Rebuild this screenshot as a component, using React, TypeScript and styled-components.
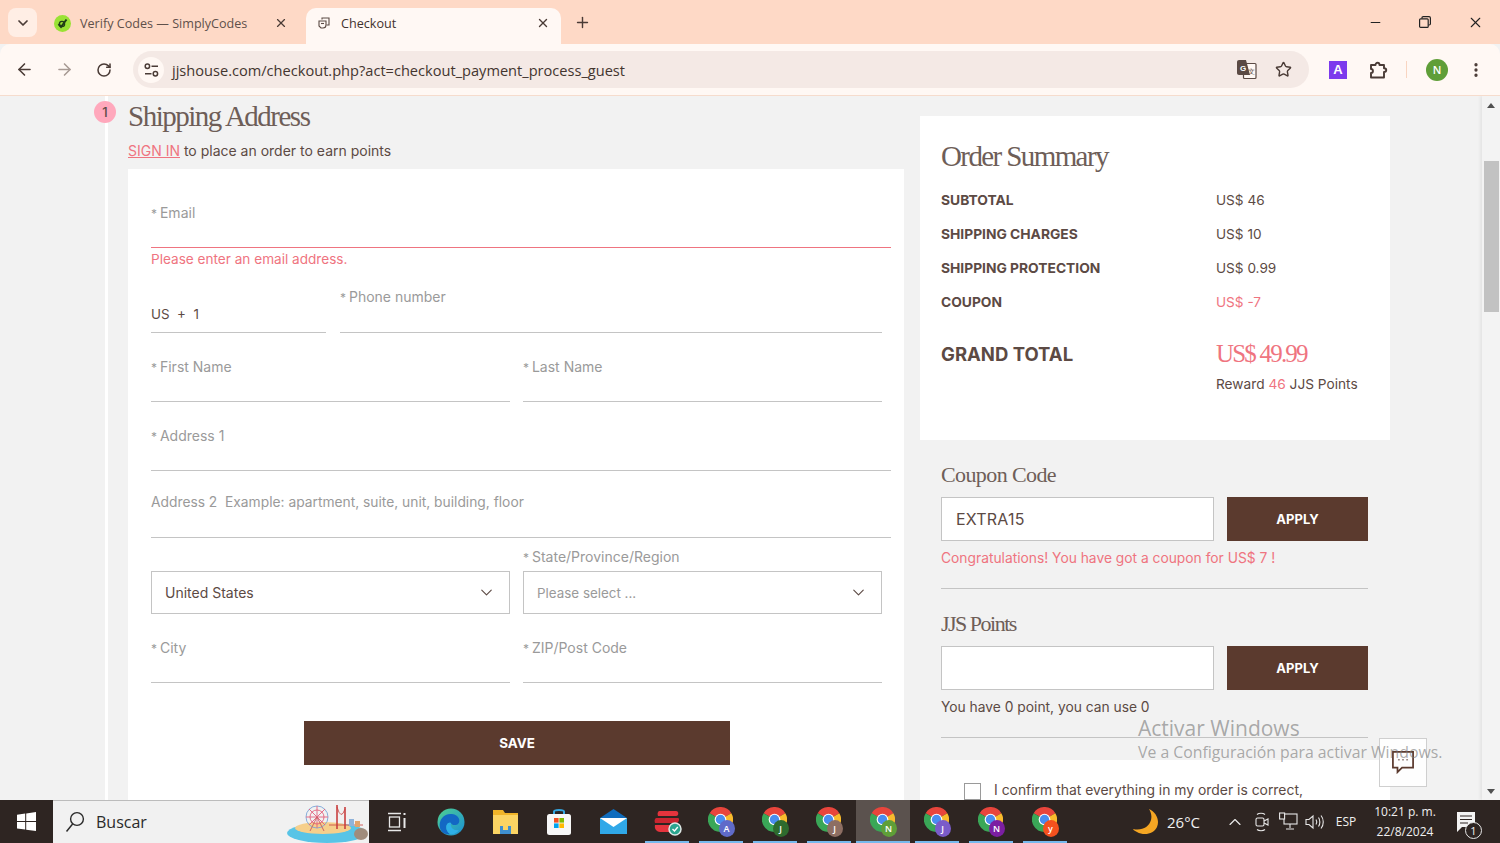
import styled, { createGlobalStyle } from "styled-components";
import { ArrowLeft, ArrowRight, ChevronDown, ChevronUp, EllipsisVertical, Minus, Plus, RotateCw, Star, X } from "lucide-react";

const GlobalStyle = createGlobalStyle`
  html, body {
    margin: 0;
    padding: 0;
    height: 100%;
    overflow: hidden;
    background: #f2f2f2;
    font-family: "Inter", "Liberation Sans", sans-serif;
  }
  * {
    box-sizing: border-box;
  }
`;

const BROWN = "#5b3a2e";
const TEXT = "#5c4a44";
const SERIF_TEXT = "#6e5e58";
const PINK = "#ef7480";
const LINE = "#c4c4c4";
const UI_FONT = `"Open Sans", "Noto Sans", sans-serif`;
const SERIF = `"Liberation Serif", serif`;

const chromeBadges = [
  { letter: "A", color: "#5f6bc9" },
  { letter: "J", color: "#2e6b2e" },
  { letter: "J", color: "#8d6e63" },
  { letter: "N", color: "#5f9e38", active: true },
  { letter: "J", color: "#7a5cc9" },
  { letter: "N", color: "#7b1fa2" },
  { letter: "y", color: "#f4511e" },
];

const summaryRows = [
  { label: "SUBTOTAL", value: "US$ 46" },
  { label: "SHIPPING CHARGES", value: "US$ 10" },
  { label: "SHIPPING PROTECTION", value: "US$ 0.99" },
  { label: "COUPON", value: "US$ -7", pink: true },
];

const ChromeLogo = ({ size = 24 }: { size?: number }) => (
  <svg width={size} height={size} viewBox="0 0 24 24">
    <path d="M12 12 1.6 6A12 12 0 0 1 22.4 6Z" fill="#e8453c" />
    <path d="M12 12 22.4 6A12 12 0 0 1 12 24Z" fill="#f9bb2d" />
    <path d="M12 12 12 24A12 12 0 0 1 1.6 6Z" fill="#3aa757" />
    <circle cx="12" cy="12" r="5.6" fill="#fff" />
    <circle cx="12" cy="12" r="4.5" fill="#4a8df0" />
  </svg>
);

const WindowsLogo = () => (
  <svg width="19" height="19" viewBox="0 0 19 19" fill="#fff">
    <path d="M0 2.7 8.2 1.5V9H0ZM9.2 1.4 19 0V9H9.2ZM0 10H8.2V17.6L0 16.4ZM9.2 10H19V19L9.2 17.7Z" />
  </svg>
);

const SearchGlass = () => (
  <svg width="20" height="22" viewBox="0 0 20 22" fill="none" stroke="#2a2a2a" strokeWidth="1.4">
    <circle cx="12" cy="8" r="6.4" />
    <path d="M7.6 13 1.5 20.5" />
  </svg>
);

const SearchArt = () => (
  <svg width="84" height="43" viewBox="0 0 84 43">
    <ellipse cx="42" cy="32" rx="40" ry="10" fill="#58c4e6" />
    <ellipse cx="38" cy="27" rx="28" ry="6" fill="#f6cf8b" />
    <g stroke="#e2607d" strokeWidth="0.9" fill="none">
      <circle cx="32" cy="16" r="11" stroke="#7aa5d8" />
      <circle cx="32" cy="16" r="7" />
      <path d="M21 16H43M32 5V27M24 8 40 24M40 8 24 24" />
      <path d="M32 16 25 30M32 16 39 30" stroke="#c75b5b" />
    </g>
    <path d="M52 28V4M60 28V6" stroke="#c94040" strokeWidth="1.6" />
    <path d="M52 6Q56 20 60 8M44 24H78" stroke="#c94040" strokeWidth="0.8" fill="none" />
    <rect x="64" y="18" width="5" height="7" fill="#8fb3da" />
    <rect x="70" y="20" width="5" height="6" fill="#e0a46e" />
    <ellipse cx="76" cy="33" rx="7" ry="6" fill="#a08c7c" />
  </svg>
);

const TaskViewIcon = () => (
  <svg width="19" height="20" viewBox="0 0 19 20" fill="none" stroke="#e8e8e8" strokeWidth="1.3">
    <path d="M0 1.5H13M0 18.5H13" />
    <rect x="1.5" y="5" width="10" height="10" />
    <path d="M16.5 1V3M16.5 6V16" strokeWidth="2" />
  </svg>
);

const EdgeIcon = () => (
  <svg width="28" height="28" viewBox="0 0 28 28">
    <defs>
      <linearGradient id="edgeA" x1="0" y1="0" x2="1" y2="1">
        <stop offset="0" stopColor="#4fd08f" />
        <stop offset="1" stopColor="#1a8fd8" />
      </linearGradient>
    </defs>
    <circle cx="14" cy="14" r="13.5" fill="url(#edgeA)" />
    <path d="M3 20C1 11 8 5 15 6 22 7 24 13 21 16 19 18 14 17 14 15 9 13 7 22 13 26 8 27 4 24 3 20Z" fill="#1368c4" />
    <path d="M14 15C13 20 17 23 22 22 20 25 16 27 13 26 7 22 9 13 14 15Z" fill="#2fb0e8" />
  </svg>
);

const FolderIcon = () => (
  <svg width="25" height="26" viewBox="0 0 25 26">
    <path d="M0 1H10L12 4H25V25H0Z" fill="#f0b429" />
    <rect y="6" width="25" height="19" fill="#fbd463" />
    <rect x="7" y="17" width="11" height="8" fill="#3f8fcf" />
    <rect x="10" y="17" width="5" height="4" fill="#fbd463" />
  </svg>
);

const StoreIcon = () => (
  <svg width="26" height="27" viewBox="0 0 26 27">
    <path d="M8 7V3.5C8 1.5 18 1.5 18 3.5V7" fill="none" stroke="#35a6e0" strokeWidth="2" />
    <rect x="1" y="6" width="24" height="21" rx="2.5" fill="#f7f7f7" />
    <rect x="8" y="10" width="4.6" height="4.6" fill="#f25022" />
    <rect x="13.4" y="10" width="4.6" height="4.6" fill="#7fba00" />
    <rect x="8" y="15.4" width="4.6" height="4.6" fill="#00a4ef" />
    <rect x="13.4" y="15.4" width="4.6" height="4.6" fill="#ffb900" />
  </svg>
);

const MailIcon = () => (
  <svg width="27" height="25" viewBox="0 0 27 25">
    <path d="M13.5 0 27 9V25H0V9Z" fill="#0f6cbd" />
    <path d="M0 9H27V25H0Z" fill="#30a8e8" />
    <path d="M0 9 13.5 18 27 9Z" fill="#fff" />
  </svg>
);

const VpnIcon = () => (
  <svg width="30" height="28" viewBox="0 0 30 28">
    <path d="M8 3H24C27 3 27 8 24 8H6C5 5 6 3 8 3Z" fill="#e5343d" />
    <path d="M5 10H26C28 10 27 15 24 15H3C2 12 3 10 5 10Z" fill="#c9252f" />
    <path d="M3 17H20C22 17 21 24 17 24H8C5 24 2 21 3 17Z" fill="#e5343d" />
    <circle cx="23" cy="21" r="6" fill="#2ba58f" stroke="#dfe8e6" strokeWidth="1.5" />
    <path d="M20.5 21 22.5 23 25.8 19" fill="none" stroke="#fff" strokeWidth="1.4" />
  </svg>
);

const MoonIcon = () => (
  <svg width="26" height="26" viewBox="0 0 26 26">
    <path d="M16 0C23 3 27 11 24 18 21 25 11 27 4 23 1 22 0 20 0 20 9 22 16 18 18 11 19 7 18 3 16 0Z" fill="#f5a623" />
  </svg>
);

const MeetIcon = () => (
  <svg width="16" height="20" viewBox="0 0 16 20" fill="none" stroke="#e8e8e8" strokeWidth="1.1">
    <path d="M3 2.5C5 .8 9 .8 11 2.5M3 17.5C5 19.2 9 19.2 11 17.5" />
    <rect x="2" y="6" width="8" height="8" rx="1.5" />
    <path d="M10 9 14 7V13L10 11" />
  </svg>
);

const NetworkIcon = () => (
  <svg width="19" height="19" viewBox="0 0 19 19" fill="none" stroke="#e8e8e8" strokeWidth="1.1">
    <rect x="5" y="2" width="13" height="10" />
    <path d="M11 12V16M7 17H15" />
    <rect x=".6" y="1" width="5" height="6" fill="#2e2522" />
  </svg>
);

const VolumeIcon = () => (
  <svg width="20" height="18" viewBox="0 0 20 18" fill="none" stroke="#e8e8e8" strokeWidth="1.1">
    <path d="M1 6.5H4L8 3V15L4 11.5H1Z" />
    <path d="M11 6.5C12 8 12 10 11 11.5M13.5 4.5C15.3 7 15.3 11 13.5 13.5M16 2.5C19 6 19 12 16 15.5" />
  </svg>
);

const NotificationIcon = () => (
  <svg width="18" height="20" viewBox="0 0 18 20">
    <path d="M0 0H18V15H5L0 20Z" fill="#f4f4f4" />
    <path d="M3 4H15M3 7.5H15M3 11H11" stroke="#2e2522" strokeWidth="1.2" />
  </svg>
);

const TranslateIcon = () => (
  <svg width="20" height="20" viewBox="0 0 20 20">
    <rect x="6.5" y="3.5" width="12.5" height="15" rx="1" fill="#fff8f4" stroke="#5b4a44" strokeWidth="1.2" />
    <path d="M0 2C0 .9.9 0 2 0H9L13 15H2C.9 15 0 14 0 13Z" fill="#5b4a44" />
    <text x="3" y="11" fontSize="8" fontWeight="700" fill="#fff" fontFamily="Liberation Sans, sans-serif">G</text>
    <text x="11" y="14" fontSize="7" fill="#5b4a44" fontFamily="Liberation Sans, sans-serif">文</text>
  </svg>
);

const TuneIcon = () => (
  <svg width="15" height="14" viewBox="0 0 15 14" fill="none" stroke="#4a3b36" strokeWidth="1.5">
    <circle cx="3.4" cy="3.2" r="2.2" />
    <path d="M7.5 3.2H14M1 10.8H7.5" />
    <circle cx="11.4" cy="10.8" r="2.2" />
  </svg>
);

const PuzzleIcon = () => (
  <svg width="19" height="18" viewBox="0 0 19 18" fill="none" stroke="#4a3b36" strokeWidth="1.9" strokeLinejoin="round">
    <path d="M2 4H6.5C6.5 1 10.5 1 10.5 4H15V7.2C18 7.2 18 11 15 11V16.5H2V12C4.6 12 4.6 8 2 8Z" />
  </svg>
);

const SimplyCodesIcon = () => (
  <svg width="17" height="17" viewBox="0 0 17 17">
    <circle cx="8.5" cy="8.5" r="8.5" fill="#9ae234" />
    <path d="M4.5 9 7 12 12.5 4.5" fill="none" stroke="#1f3d16" strokeWidth="2" />
    <circle cx="8" cy="9" r="2.6" fill="none" stroke="#1f3d16" strokeWidth="1.3" />
  </svg>
);

const CheckoutFavicon = () => (
  <svg width="12" height="12" viewBox="0 0 12 12" fill="none" stroke="#5b4a44" strokeWidth="1.1">
    <path d="M4 2.5V1H11V8H8.5" />
    <path d="M1 4H8V8C8 10 6.5 11 5 11H3L1 9Z" />
    <path d="M3 6.5H6" />
  </svg>
);

const ChatIcon = () => (
  <svg width="22" height="23" viewBox="0 0 24 25" fill="none" stroke="#5b3a2e" strokeWidth="1.9">
    <path d="M1 1H23V18H11L6 23V18H1Z" />
    <path d="M6.5 9.5H8.5M11 9.5H13M15.5 9.5H17.5" strokeWidth="1.6" stroke="#9a8a84" />
  </svg>
);

const ScrollArrow = styled.span<{ $down?: boolean }>`
  width: 0;
  height: 0;
  border-left: 4px solid transparent;
  border-right: 4px solid transparent;
  ${(p) => (p.$down ? "border-top: 5px solid #505050;" : "border-bottom: 5px solid #505050;")}
`;

export default function App() {
  return (
    <>
      <GlobalStyle />
      <Screen>
        <TabStrip>
          <TabSearch>
            <ChevronDown size={16} strokeWidth={2.6} />
          </TabSearch>
          <InactiveTab>
            <SimplyCodesIcon />
            <TabTitle>Verify Codes — SimplyCodes</TabTitle>
            <X size={14} strokeWidth={2} />
          </InactiveTab>
          <ActiveTab>
            <CheckoutFavicon />
            <TabTitle $active>Checkout</TabTitle>
            <X size={14} strokeWidth={2.4} />
          </ActiveTab>
          <NewTab>
            <Plus size={17} strokeWidth={2} />
          </NewTab>
          <WindowButtons>
            <WindowButton>
              <Minus size={15} strokeWidth={1.6} />
            </WindowButton>
            <WindowButton>
              <svg width="12" height="12" viewBox="0 0 12 12" fill="none" stroke="#222" strokeWidth="1.2">
                <rect x=".6" y="2.8" width="8.6" height="8.6" rx="1" />
                <path d="M3 2.6V1.8C3 1 3.4.6 4.2.6H10C10.8.6 11.4 1.2 11.4 2V7.8C11.4 8.6 11 9 10.2 9H9.4" />
              </svg>
            </WindowButton>
            <WindowButton>
              <X size={17} strokeWidth={1.5} />
            </WindowButton>
          </WindowButtons>
        </TabStrip>

        <Toolbar>
          <NavButton>
            <ArrowLeft size={19} strokeWidth={2} />
          </NavButton>
          <NavButton $disabled>
            <ArrowRight size={19} strokeWidth={2} />
          </NavButton>
          <NavButton>
            <RotateCw size={16} strokeWidth={2.3} />
          </NavButton>
          <Omnibox>
            <SiteButton>
              <TuneIcon />
            </SiteButton>
            <UrlText>jjshouse.com/checkout.php?act=checkout_payment_process_guest</UrlText>
            <OmniIcons>
              <TranslateIcon />
              <Star size={17} strokeWidth={2} />
            </OmniIcons>
          </Omnibox>
          <ExtensionA>A</ExtensionA>
          <PuzzleSlot>
            <PuzzleIcon />
          </PuzzleSlot>
          <ToolbarDivider />
          <ProfileBadge>N</ProfileBadge>
          <MenuSlot>
            <EllipsisVertical size={18} strokeWidth={2.4} />
          </MenuSlot>
        </Toolbar>

        <Viewport>
          <Page>
            <LeftColumn>
              <StepBadge>1</StepBadge>
              <PageTitle>Shipping Address</PageTitle>
              <SignInLine>
                <SignInLink>SIGN IN</SignInLink> to place an order to earn points
              </SignInLine>
              <FormCard>
                <EmailField $gap={25}>
                  <FieldLabel>
                    <Required>*</Required> Email
                  </FieldLabel>
                </EmailField>
                <ErrorText>Please enter an email address.</ErrorText>
                <PhoneRow>
                  <PhonePrefix>US&nbsp; + &nbsp;1</PhonePrefix>
                  <Field $gap={26}>
                    <FieldLabel>
                      <Required>*</Required> Phone number
                    </FieldLabel>
                  </Field>
                </PhoneRow>
                <TwoColumns $top={25}>
                  <Field $gap={25}>
                    <FieldLabel>
                      <Required>*</Required> First Name
                    </FieldLabel>
                  </Field>
                  <Field $gap={25}>
                    <FieldLabel>
                      <Required>*</Required> Last Name
                    </FieldLabel>
                  </Field>
                </TwoColumns>
                <Field $top={25} $gap={25}>
                  <FieldLabel>
                    <Required>*</Required> Address 1
                  </FieldLabel>
                </Field>
                <Field $top={22} $gap={26}>
                  <FieldHint>Address 2&nbsp; Example: apartment, suite, unit, building, floor</FieldHint>
                </Field>
                <TwoColumns $top={10}>
                  <SelectGroup>
                    <SelectBox $offset={23}>
                      <SelectValue>United States</SelectValue>
                      <ChevronDown size={19} strokeWidth={1.4} />
                    </SelectBox>
                  </SelectGroup>
                  <SelectGroup>
                    <FieldLabel>
                      <Required>*</Required> State/Province/Region
                    </FieldLabel>
                    <SelectBox>
                      <SelectValue $placeholder>Please select ...</SelectValue>
                      <ChevronDown size={19} strokeWidth={1.4} />
                    </SelectBox>
                  </SelectGroup>
                </TwoColumns>
                <TwoColumns $top={25}>
                  <Field $gap={25}>
                    <FieldLabel>
                      <Required>*</Required> City
                    </FieldLabel>
                  </Field>
                  <Field $gap={25}>
                    <FieldLabel>
                      <Required>*</Required> ZIP/Post Code
                    </FieldLabel>
                  </Field>
                </TwoColumns>
                <SaveButton>SAVE</SaveButton>
              </FormCard>
            </LeftColumn>

            <RightColumn>
              <SummaryCard>
                <SummaryTitle>Order Summary</SummaryTitle>
                {summaryRows.map((row) => (
                  <SummaryRow key={row.label}>
                    <SummaryLabel>{row.label}</SummaryLabel>
                    <SummaryValue $pink={row.pink}>{row.value}</SummaryValue>
                  </SummaryRow>
                ))}
                <GrandRow>
                  <GrandLabel>GRAND TOTAL</GrandLabel>
                  <GrandValue>US$ 49.99</GrandValue>
                </GrandRow>
                <RewardLine>
                  Reward <PinkText>46</PinkText> JJS Points
                </RewardLine>
              </SummaryCard>

              <SideSection>
                <SectionTitle $spacing={-0.6}>Coupon Code</SectionTitle>
                <ApplyRow>
                  <ApplyInput>EXTRA15</ApplyInput>
                  <ApplyButton>APPLY</ApplyButton>
                </ApplyRow>
                <SectionNote $pink>Congratulations! You have got a coupon for US$ 7 !</SectionNote>
                <SectionTitle $spacing={-1.5}>JJS Points</SectionTitle>
                <ApplyRow>
                  <ApplyInput />
                  <ApplyButton>APPLY</ApplyButton>
                </ApplyRow>
                <SectionNote>You have 0 point, you can use 0</SectionNote>
              </SideSection>

              <ConfirmCard>
                <ConfirmBox />
                <ConfirmText>I confirm that everything in my order is correct,</ConfirmText>
              </ConfirmCard>
            </RightColumn>
          </Page>

          <Scrollbar>
            <ScrollButton>
              <ScrollArrow />
            </ScrollButton>
            <ScrollThumb />
            <ScrollButton>
              <ScrollArrow $down />
            </ScrollButton>
          </Scrollbar>

          <ChatButton>
            <ChatIcon />
          </ChatButton>
          <Watermark>
            <WatermarkTitle>Activar Windows</WatermarkTitle>
            <WatermarkText>Ve a Configuración para activar Windows.</WatermarkText>
          </Watermark>
        </Viewport>

        <Taskbar>
          <StartButton>
            <WindowsLogo />
          </StartButton>
          <SearchBox>
            <SearchGlass />
            <SearchText>Buscar</SearchText>
            <SearchArt />
          </SearchBox>
          <TaskButton>
            <TaskViewIcon />
          </TaskButton>
          <TaskButton>
            <EdgeIcon />
          </TaskButton>
          <TaskButton>
            <FolderIcon />
          </TaskButton>
          <TaskButton>
            <StoreIcon />
          </TaskButton>
          <TaskButton>
            <MailIcon />
          </TaskButton>
          <TaskButton $open>
            <VpnIcon />
          </TaskButton>
          {chromeBadges.map((item, i) => (
            <TaskButton key={i} $open $active={item.active}>
              <ChromeWrap>
                <ChromeLogo size={25} />
                <ChromeBadge $color={item.color}>{item.letter}</ChromeBadge>
              </ChromeWrap>
            </TaskButton>
          ))}
          <Weather>
            <MoonIcon />
            <WeatherText>26°C</WeatherText>
          </Weather>
          <TrayIcon $width={28}>
            <ChevronUp size={20} strokeWidth={1.4} />
          </TrayIcon>
          <TrayIcon $width={26}>
            <MeetIcon />
          </TrayIcon>
          <TrayIcon $width={26}>
            <NetworkIcon />
          </TrayIcon>
          <TrayIcon $width={27}>
            <VolumeIcon />
          </TrayIcon>
          <TrayLabel>ESP</TrayLabel>
          <Clock>
            <span>10:21 p. m.</span>
            <span>22/8/2024</span>
          </Clock>
          <NotifyWrap>
            <NotificationIcon />
            <NotifyCount>1</NotifyCount>
          </NotifyWrap>
        </Taskbar>
      </Screen>
    </>
  );
}

const Screen = styled.div`
  width: 1500px;
  height: 843px;
  display: flex;
  flex-direction: column;
  overflow: hidden;
`;

const TabStrip = styled.div`
  height: 44px;
  flex: none;
  display: flex;
  align-items: flex-end;
  background: #fed9c6;
  font-family: ${UI_FONT};
  color: #4a3b36;
`;

const TabSearch = styled.div`
  width: 29px;
  height: 29px;
  margin: 0 0 7px 8px;
  border-radius: 8px;
  background: #ffeee5;
  display: flex;
  align-items: center;
  justify-content: center;
`;

const InactiveTab = styled.div`
  width: 253px;
  height: 36px;
  margin-left: 16px;
  padding: 0 18px 6px 1px;
  display: flex;
  align-items: center;
  gap: 9px;
  svg:last-child {
    margin-left: auto;
  }
`;

const ActiveTab = styled.div`
  width: 255px;
  height: 36px;
  padding: 0 11px 6px 12px;
  border-radius: 10px 10px 0 0;
  background: #fff8f4;
  display: flex;
  align-items: center;
  gap: 11px;
  svg:last-child {
    margin-left: auto;
  }
`;

const TabTitle = styled.span<{ $active?: boolean }>`
  font-size: 12.6px;
  white-space: nowrap;
  color: ${(p) => (p.$active ? "#3f322e" : "#5f504a")};
`;

const NewTab = styled.div`
  width: 42px;
  height: 36px;
  padding-bottom: 7px;
  display: flex;
  align-items: center;
  justify-content: center;
`;

const WindowButtons = styled.div`
  margin-left: auto;
  height: 44px;
  display: flex;
  color: #222;
`;

const WindowButton = styled.div`
  width: 50px;
  height: 44px;
  display: flex;
  align-items: center;
  justify-content: center;
`;

const Toolbar = styled.div`
  height: 52px;
  flex: none;
  display: flex;
  align-items: center;
  background: #fff8f4;
  border-bottom: 1px solid #f6dccd;
  border-radius: 10px 10px 0 0;
  color: #4a3b36;
`;

const NavButton = styled.div<{ $disabled?: boolean }>`
  width: 40px;
  display: flex;
  justify-content: center;
  color: ${(p) => (p.$disabled ? "#a89a94" : "#4a3b36")};
  &:first-child {
    margin-left: 4px;
  }
`;

const Omnibox = styled.div`
  width: 1176px;
  height: 37px;
  margin-left: 9px;
  padding: 0 17px 0 5px;
  border-radius: 19px;
  background: #f4e9e5;
  display: flex;
  align-items: center;
`;

const SiteButton = styled.div`
  width: 26px;
  height: 26px;
  border-radius: 50%;
  background: #fff8f4;
  display: flex;
  align-items: center;
  justify-content: center;
`;

const UrlText = styled.span`
  margin-left: 8px;
  font: 14.6px ${UI_FONT};
  color: #43352f;
  white-space: nowrap;
`;

const OmniIcons = styled.div`
  margin-left: auto;
  display: flex;
  align-items: center;
  gap: 18px;
`;

const ExtensionA = styled.div`
  width: 18px;
  height: 18px;
  margin-left: 20px;
  background: #7c3aed;
  color: #fff;
  font: 700 13px/18px "Liberation Sans", sans-serif;
  text-align: center;
`;

const PuzzleSlot = styled.div`
  width: 40px;
  margin-left: 11px;
  display: flex;
  justify-content: center;
`;

const ToolbarDivider = styled.div`
  width: 1px;
  height: 17px;
  margin-left: 8px;
  background: #f9d5c1;
`;

const ProfileBadge = styled.div`
  width: 22px;
  height: 22px;
  margin-left: 19px;
  border-radius: 50%;
  background: #5f9e38;
  color: #fff;
  font: 600 11px/22px ${UI_FONT};
  text-align: center;
`;

const MenuSlot = styled.div`
  width: 40px;
  margin-left: 8px;
  display: flex;
  justify-content: center;
`;

const Viewport = styled.div`
  position: relative;
  flex: 1;
  min-height: 0;
  display: flex;
  background: #f2f2f2;
  overflow: hidden;
`;

const Page = styled.div`
  flex: 1;
  min-width: 0;
  padding-left: 105px;
  display: flex;
  gap: 16px;
  align-items: stretch;
`;

const LeftColumn = styled.div`
  position: relative;
  width: 799px;
  flex: none;
  padding-left: 20px;
  border-left: 3px solid #fff;
`;

const StepBadge = styled.div`
  position: absolute;
  left: -14px;
  top: 5px;
  width: 22px;
  height: 22px;
  border-radius: 50%;
  background: #ffa8bc;
  color: #5c4a44;
  font-size: 13px;
  font-weight: 500;
  line-height: 22px;
  text-align: center;
`;

const PageTitle = styled.h1`
  margin: 0;
  height: 40px;
  font: 400 29px/40px ${SERIF};
  letter-spacing: -1.5px;
  color: ${SERIF_TEXT};
`;

const SignInLine = styled.div`
  margin-top: 6px;
  font-size: 14px;
  line-height: 18px;
  color: ${TEXT};
`;

const SignInLink = styled.span`
  color: ${PINK};
  text-decoration: underline;
`;

const FormCard = styled.div`
  margin-top: 9px;
  height: 640px;
  padding: 35px 13px 0 23px;
  background: #fff;
`;

const Field = styled.div<{ $top?: number; $gap: number }>`
  margin-top: ${(p) => p.$top ?? 0}px;
  padding-bottom: ${(p) => p.$gap}px;
  border-bottom: 1px solid ${LINE};
`;

const EmailField = styled(Field)`
  border-bottom-color: ${PINK};
`;

const FieldLabel = styled.div`
  font-size: 14px;
  line-height: 18px;
  color: #9a9a9a;
`;

const FieldHint = styled.div`
  font-size: 13.8px;
  line-height: 18px;
  color: #9a9a9a;
`;

const Required = styled.span`
  font-size: 12px;
  line-height: 0;
  margin-right: -1px;
`;

const ErrorText = styled.div`
  margin-top: 2px;
  font-size: 13.6px;
  line-height: 18px;
  color: ${PINK};
`;

const PhoneRow = styled.div`
  margin-top: 20px;
  margin-right: 9px;
  display: grid;
  grid-template-columns: 175px 1fr;
  gap: 14px;
  align-items: end;
`;

const PhonePrefix = styled.div`
  padding-bottom: 9px;
  border-bottom: 1px solid ${LINE};
  font-size: 13.4px;
  line-height: 18px;
  color: ${TEXT};
`;

const TwoColumns = styled.div<{ $top: number }>`
  margin-top: ${(p) => p.$top}px;
  margin-right: 9px;
  display: grid;
  grid-template-columns: 359px 359px;
  gap: 13px;
`;

const SelectGroup = styled.div`
  display: flex;
  flex-direction: column;
  gap: 5px;
`;

const SelectBox = styled.div<{ $offset?: number }>`
  height: 43px;
  margin-top: ${(p) => p.$offset ?? 0}px;
  padding: 0 13px;
  border: 1px solid ${LINE};
  display: flex;
  align-items: center;
  justify-content: space-between;
  color: #5c4a44;
`;

const SelectValue = styled.span<{ $placeholder?: boolean }>`
  font-size: ${(p) => (p.$placeholder ? "13.4px" : "14px")};
  color: ${(p) => (p.$placeholder ? "#9a9a9a" : TEXT)};
`;

const SaveButton = styled.div`
  width: 426px;
  height: 44px;
  margin: 38px 0 0 153px;
  background: ${BROWN};
  color: #fff;
  font-size: 13.4px;
  font-weight: 700;
  line-height: 44px;
  text-align: center;
`;

const RightColumn = styled.div`
  width: 470px;
  padding-top: 20px;
  display: flex;
  flex-direction: column;
  flex: none;
`;

const SummaryCard = styled.div`
  height: 324px;
  flex: none;
  padding: 20px 21px 0;
  background: #fff;
`;

const SummaryTitle = styled.h2`
  margin: 0 0 7px;
  height: 40px;
  font: 400 29px/40px ${SERIF};
  letter-spacing: -1.6px;
  color: ${SERIF_TEXT};
`;

const SummaryRow = styled.div`
  height: 34px;
  display: grid;
  grid-template-columns: 275px 1fr;
  align-items: center;
  font-size: 13.8px;
`;

const SummaryLabel = styled.span`
  font-weight: 700;
  color: ${TEXT};
`;

const SummaryValue = styled.span<{ $pink?: boolean }>`
  font-size: 13.6px;
  color: ${(p) => (p.$pink ? PINK : TEXT)};
`;

const GrandRow = styled.div`
  margin-top: 19px;
  height: 31px;
  display: grid;
  grid-template-columns: 275px 1fr;
  align-items: center;
`;

const GrandLabel = styled.span`
  font-size: 18.5px;
  font-weight: 700;
  color: ${TEXT};
`;

const GrandValue = styled.span`
  font: 400 25px/31px ${SERIF};
  letter-spacing: -1.8px;
  color: ${PINK};
`;

const RewardLine = styled.div`
  margin: 6px 0 0 275px;
  font-size: 13.7px;
  line-height: 18px;
  color: ${TEXT};
`;

const PinkText = styled.span`
  color: ${PINK};
`;

const SideSection = styled.div`
  padding: 20px 22px 0 21px;
`;

const SectionTitle = styled.h3<{ $spacing: number }>`
  margin: 0 0 7px;
  height: 30px;
  font: 400 22px/30px ${SERIF};
  letter-spacing: ${(p) => p.$spacing}px;
  color: ${SERIF_TEXT};
`;

const ApplyRow = styled.div`
  display: grid;
  grid-template-columns: 273px 141px;
  gap: 13px;
`;

const ApplyInput = styled.div`
  height: 44px;
  padding-left: 14px;
  border: 1px solid ${LINE};
  background: #fff;
  font-size: 16px;
  letter-spacing: 0.2px;
  line-height: 42px;
  color: ${TEXT};
`;

const ApplyButton = styled.div`
  height: 44px;
  background: ${BROWN};
  color: #fff;
  font-size: 13px;
  font-weight: 700;
  line-height: 44px;
  text-align: center;
`;

const SectionNote = styled.div<{ $pink?: boolean }>`
  margin-top: 8px;
  margin-bottom: 20px;
  padding-bottom: 21px;
  border-bottom: 1px solid ${LINE};
  font-size: 13.8px;
  line-height: 18px;
  color: ${(p) => (p.$pink ? PINK : TEXT)};
`;

const ConfirmCard = styled.div`
  margin-top: 2px;
  height: 60px;
  flex: none;
  padding: 23px 0 0 44px;
  background: #fff;
  display: flex;
  align-items: flex-start;
  gap: 13px;
`;

const ConfirmBox = styled.div`
  width: 17px;
  height: 17px;
  flex: none;
  border: 1px solid #9a9a9a;
`;

const ConfirmText = styled.span`
  font-size: 13.9px;
  line-height: 15px;
  color: ${TEXT};
`;

const Scrollbar = styled.div`
  width: 18px;
  flex: none;
  display: flex;
  flex-direction: column;
  background: #f3f3f3;
  box-shadow: -2px 0 3px rgba(0, 0, 0, 0.06);
`;

const ScrollButton = styled.div`
  height: 18px;
  display: flex;
  align-items: center;
  justify-content: center;
`;

const ScrollThumb = styled.div`
  width: 15px;
  height: 151px;
  margin: 47px 0 auto 2px;
  background: #c2c2c2;
`;

const ChatButton = styled.div`
  position: absolute;
  left: 1379px;
  top: 642px;
  width: 48px;
  height: 49px;
  border: 1px solid #cfcfcf;
  background: rgba(255, 255, 255, 0.9);
  display: flex;
  align-items: center;
  justify-content: center;
`;

const Watermark = styled.div`
  position: absolute;
  left: 1138px;
  top: 618px;
  font-family: ${UI_FONT};
  color: rgba(120, 120, 120, 0.62);
  white-space: nowrap;
  pointer-events: none;
`;

const WatermarkTitle = styled.div`
  font-size: 21px;
  line-height: 28px;
`;

const WatermarkText = styled.div`
  font-size: 15.8px;
  line-height: 20px;
`;

const Taskbar = styled.div`
  height: 43px;
  flex: none;
  display: flex;
  align-items: stretch;
  background: #2e2522;
  font-family: ${UI_FONT};
  color: #f0f0f0;
`;

const StartButton = styled.div`
  width: 53px;
  display: flex;
  align-items: center;
  justify-content: center;
`;

const SearchBox = styled.div`
  width: 316px;
  margin-right: 1px;
  padding-left: 12px;
  border-top: 1px solid #bcbcbc;
  background: #f1f1f1;
  display: flex;
  align-items: center;
  gap: 11px;
  svg:last-child {
    margin-left: auto;
  }
`;

const SearchText = styled.span`
  font-size: 16px;
  color: #2a2a2a;
`;

const TaskButton = styled.div<{ $open?: boolean; $active?: boolean }>`
  position: relative;
  width: 54px;
  flex: none;
  display: flex;
  align-items: center;
  justify-content: center;
  background: ${(p) => (p.$active ? "#5b524e" : "transparent")};
  ${(p) =>
    p.$open
      ? `&::after {
          content: "";
          position: absolute;
          left: ${p.$active ? 0 : 5}px;
          right: ${p.$active ? 0 : 5}px;
          bottom: 0;
          height: 2px;
          background: #76b9ed;
        }`
      : ""}
`;

const ChromeWrap = styled.div`
  position: relative;
  width: 27px;
  height: 30px;
`;

const ChromeBadge = styled.span<{ $color: string }>`
  position: absolute;
  right: 0;
  bottom: 0;
  width: 16px;
  height: 17px;
  border-radius: 50%;
  background: ${(p) => p.$color};
  color: #fff;
  font-size: 9px;
  font-weight: 600;
  line-height: 17px;
  text-align: center;
`;

const Weather = styled.div`
  margin-left: 61px;
  width: 88px;
  flex: none;
  display: flex;
  align-items: center;
  gap: 8px;
`;

const WeatherText = styled.span`
  font-size: 15px;
`;

const TrayIcon = styled.div<{ $width: number }>`
  width: ${(p) => p.$width}px;
  flex: none;
  display: flex;
  align-items: center;
  justify-content: center;
  color: #e8e8e8;
`;

const TrayLabel = styled.div`
  width: 36px;
  flex: none;
  font-size: 12px;
  line-height: 43px;
  text-align: center;
`;

const Clock = styled.div`
  width: 76px;
  margin-left: 3px;
  flex: none;
  display: flex;
  flex-direction: column;
  align-items: center;
  justify-content: center;
  font-size: 12px;
  line-height: 20px;
`;

const NotifyWrap = styled.div`
  position: relative;
  width: 18px;
  margin-left: 14px;
  flex: none;
  display: flex;
  align-items: center;
`;

const NotifyCount = styled.span`
  position: absolute;
  left: 8px;
  top: 22px;
  width: 17px;
  height: 17px;
  border: 1px solid #e8e8e8;
  border-radius: 50%;
  background: #2e2522;
  font-size: 11px;
  line-height: 15px;
  text-align: center;
`;
